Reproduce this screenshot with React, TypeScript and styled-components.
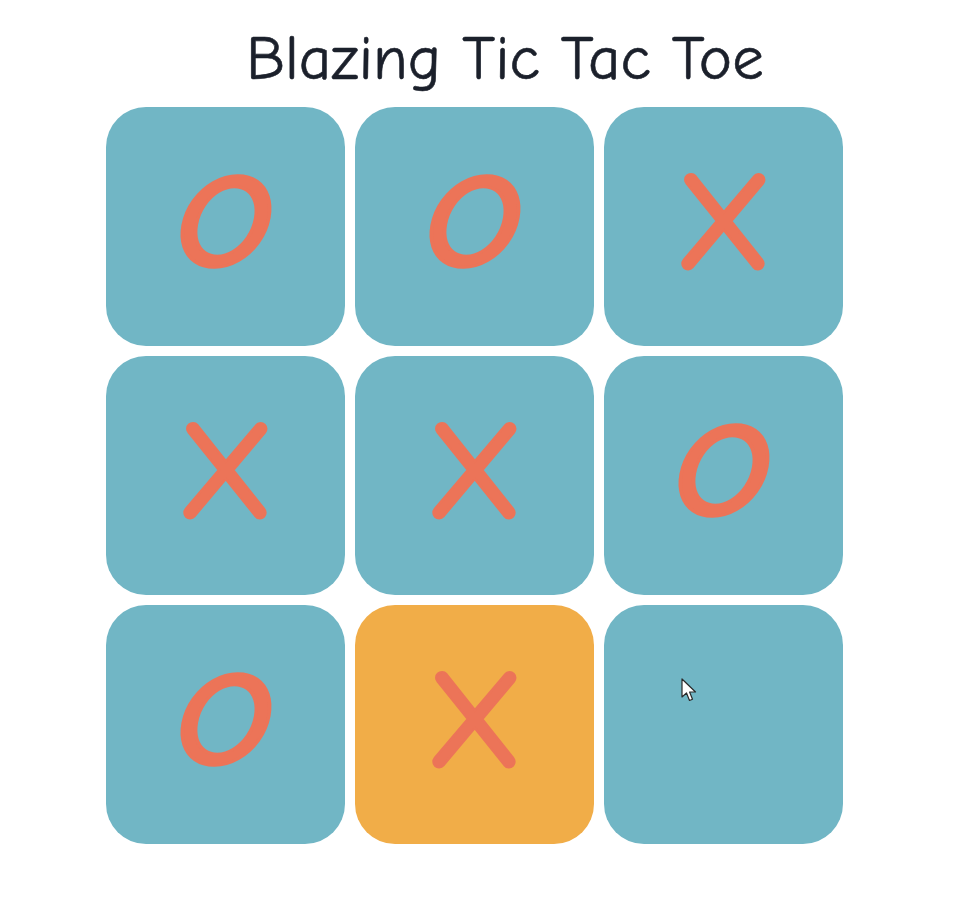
import React from "react";
import styled, { createGlobalStyle } from "styled-components";

const GlobalStyle = createGlobalStyle`
  body {
    margin: 0;
    background: #ffffff;
    font-family: "Comic Sans MS", "Comic Neue", "DejaVu Sans", sans-serif;
  }
`;

const Page = styled.div`
  width: 974px;
  height: 917px;
  padding-top: 24px;
  box-sizing: border-box;
`;

const Title = styled.h1`
  margin: 0 0 13px 0;
  padding-left: 246px;
  height: 70px;
  line-height: 70px;
  font-size: 63px;
  font-weight: normal;
  color: #1b202b;
  white-space: nowrap;
  -webkit-text-stroke: 0.6px #1b202b;
`;

const Board = styled.div`
  display: grid;
  grid-template-columns: repeat(3, 239px);
  grid-auto-rows: 239px;
  column-gap: 10px;
  row-gap: 10px;
  margin-left: 106px;
`;

const Tile = styled.div<{ $active?: boolean }>`
  position: relative;
  display: flex;
  align-items: center;
  justify-content: center;
  padding-bottom: 8px;
  box-sizing: border-box;
  border-radius: 40px;
  background: ${(p) => (p.$active ? "#f1ad48" : "#71b6c5")};
`;

const Mark = styled.span<{ $o?: boolean }>`
  font-size: ${(p) => (p.$o ? "130px" : "136px")};
  line-height: 1;
  color: #ec7458;
  -webkit-text-stroke: ${(p) => (p.$o ? "6px" : "5px")} #ec7458;
  paint-order: stroke fill;
  transform: ${(p) => (p.$o ? "scaleX(1.14) skewX(-9deg)" : "none")};
`;

const Cursor = styled.svg`
  position: absolute;
  left: 77px;
  top: 73px;
`;

const cells = ["O", "O", "X", "X", "X", "O", "O", "X", ""];

export default function App() {
  return (
    <Page>
      <GlobalStyle />
      <Title>Blazing Tic Tac Toe</Title>
      <Board>
        {cells.map((c, i) => (
          <Tile key={i} $active={i === 7}>
            {c && <Mark $o={c === "O"}>{c}</Mark>}
            {i === 8 && (
              <Cursor width="18" height="26" viewBox="0 0 18 26">
                <path
                  d="M1 1 L1 19 L5.5 15 L8.5 22.5 L11.5 21.2 L8.6 14 L14.5 14 Z"
                  fill="#ffffff"
                  stroke="#2a2a2a"
                  strokeWidth="1.2"
                  strokeLinejoin="round"
                />
              </Cursor>
            )}
          </Tile>
        ))}
      </Board>
    </Page>
  );
}
